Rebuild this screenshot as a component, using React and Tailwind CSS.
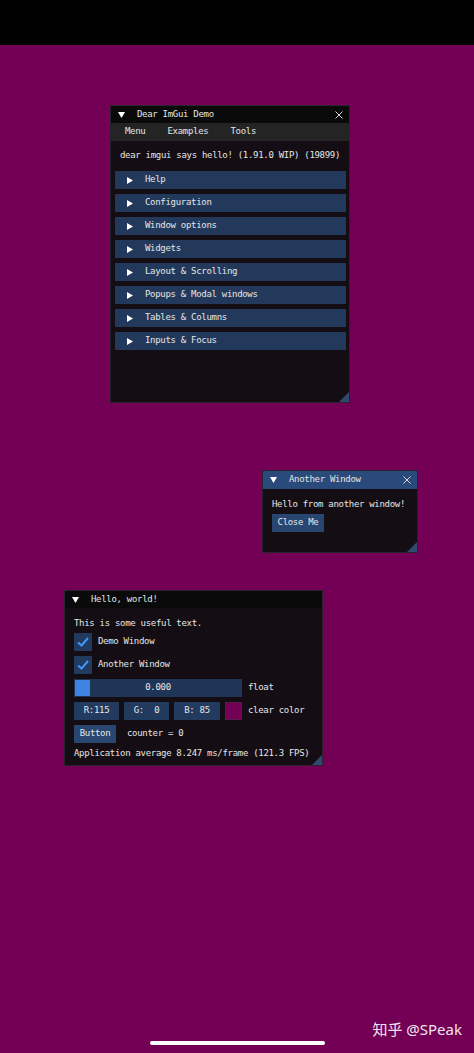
import React from 'react';

const mono = "font-['DejaVu_Sans_Mono','Liberation_Mono',monospace] text-[9px] tracking-[-0.3px] text-[#e6e6e6]";

const headers = [
  'Help',
  'Configuration',
  'Window options',
  'Widgets',
  'Layout & Scrolling',
  'Popups & Modal windows',
  'Tables & Columns',
  'Inputs & Focus',
];

const TriDown = () => (
  <svg width="7" height="6" viewBox="0 0 7 6" className="shrink-0">
    <path d="M0 0 H7 L3.5 6 Z" fill="#ffffff" />
  </svg>
);

const TriRight = () => (
  <svg width="6" height="7" viewBox="0 0 6 7" className="shrink-0">
    <path d="M0 0 L6 3.5 L0 7 Z" fill="#ffffff" />
  </svg>
);

const CloseX = () => (
  <svg width="8" height="8" viewBox="0 0 8 8" className="shrink-0">
    <path d="M0.5 0.5 L7.5 7.5 M7.5 0.5 L0.5 7.5" stroke="#d8d8d8" strokeWidth="1" />
  </svg>
);

const Check = () => (
  <svg width="12" height="10" viewBox="0 0 12 10">
    <path d="M1 5.5 L4.5 8.5 L11 1" stroke="#4296fa" strokeWidth="2" fill="none" />
  </svg>
);

const Grip = () => (
  <svg width="10" height="10" viewBox="0 0 10 10" className="absolute right-0 bottom-0">
    <path d="M10 0 L10 10 L0 10 Z" fill="#2f4a6e" />
  </svg>
);

const TitleBar = ({ title, active, close }) => (
  <div className={`flex h-[17px] items-center pl-[7px] pr-[6px] ${active ? 'bg-[#294a7a]' : 'bg-[#0a0a0a]'}`}>
    <TriDown />
    <span className="ml-[12px] flex-1">{title}</span>
    {close && <CloseX />}
  </div>
);

const DemoWindow = () => (
  <div className={`absolute left-[110px] top-[105px] w-[240px] h-[298px] bg-[#140e14] border border-[#2a2230] ${mono}`}>
    <TitleBar title="Dear ImGui Demo" close />
    <div className="flex h-[18px] items-center gap-[22px] bg-[#242424] pl-[14px]">
      <span>Menu</span>
      <span>Examples</span>
      <span>Tools</span>
    </div>
    <div className="pl-[9px] pt-[9px] leading-[10px]">dear imgui says hello! (1.91.0 WIP) (19899)</div>
    <div className="mt-[11px] flex flex-col gap-[5px] pl-[4px] pr-[3px]">
      {headers.map((h) => (
        <div key={h} className="flex h-[18px] items-center bg-[#23395b] pl-[12px]">
          <TriRight />
          <span className="ml-[12px]">{h}</span>
        </div>
      ))}
    </div>
    <Grip />
  </div>
);

const AnotherWindow = () => (
  <div className={`absolute left-[262px] top-[470px] w-[156px] h-[83px] bg-[#140e14] border border-[#2a2230] ${mono}`}>
    <div className="flex h-[18px] items-center bg-[#294a7a] pl-[7px] pr-[6px]">
      <TriDown />
      <span className="ml-[12px] flex-1">Another Window</span>
      <CloseX />
    </div>
    <div className="pl-[9px] pt-[10px] leading-[10px]">Hello from another window!</div>
    <div className="ml-[9px] mt-[5px] flex h-[18px] w-[52px] items-center justify-center bg-[#28466f]">Close Me</div>
    <Grip />
  </div>
);

const Checkbox = ({ label }) => (
  <div className="flex h-[18px] items-center">
    <div className="flex h-[18px] w-[18px] items-center justify-center bg-[#213a5e]">
      <Check />
    </div>
    <span className="ml-[6px]">{label}</span>
  </div>
);

const Field = ({ w, children }) => (
  <div className={`flex h-[18px] items-center justify-center bg-[#213a5e] ${w}`}>{children}</div>
);

const HelloWindow = () => (
  <div className={`absolute left-[64px] top-[590px] w-[259px] h-[176px] bg-[#140e14] border border-[#2a2230] ${mono}`}>
    <div className="flex h-[17px] items-center bg-[#0a0a0a] pl-[7px]">
      <TriDown />
      <span className="ml-[12px]">Hello, world!</span>
    </div>
    <div className="flex flex-col px-[9px] pt-[10px]">
      <div className="leading-[10px]">This is some useful text.</div>
      <div className="mt-[5px] flex flex-col gap-[5px]">
        <Checkbox label="Demo Window" />
        <Checkbox label="Another Window" />
        <div className="flex h-[18px] items-center">
          <div className="relative flex h-[18px] w-[168px] items-center justify-center bg-[#1f3557]">
            <div className="absolute left-[1px] top-[1px] h-[16px] w-[15px] bg-[#3d85e0]" />
            <span className="relative">0.000</span>
          </div>
          <span className="ml-[6px]">float</span>
        </div>
        <div className="flex h-[18px] items-center gap-[5px]">
          <Field w="w-[45px]">R:115</Field>
          <Field w="w-[45px]">G:&nbsp;&nbsp;0</Field>
          <Field w="w-[46px]">B:&nbsp;85</Field>
          <div className="h-[18px] w-[17px] bg-[#730055] border border-[#5a1a50]" />
          <span className="ml-[1px]">clear color</span>
        </div>
        <div className="flex h-[18px] items-center">
          <div className="flex h-[18px] w-[42px] items-center justify-center bg-[#28466f]">Button</div>
          <span className="ml-[11px]">counter = 0</span>
        </div>
      </div>
      <div className="mt-[5px] leading-[10px]">Application average 8.247 ms/frame (121.3 FPS)</div>
    </div>
    <Grip />
  </div>
);

export default function App() {
  return (
    <div className="relative h-[1053px] w-[474px] overflow-hidden bg-[#730055]">
      <div className="h-[45px] bg-black" />
      <DemoWindow />
      <AnotherWindow />
      <HelloWindow />
      <div className="absolute right-[12px] top-[1018px] font-['Noto_Sans','Noto_Sans_CJK_SC',sans-serif] text-[15px] text-[#f0e6ee]">
        知乎 @SPeak
      </div>
      <div className="absolute left-[150px] top-[1041px] h-[4px] w-[175px] rounded-full bg-white" />
    </div>
  );
}
